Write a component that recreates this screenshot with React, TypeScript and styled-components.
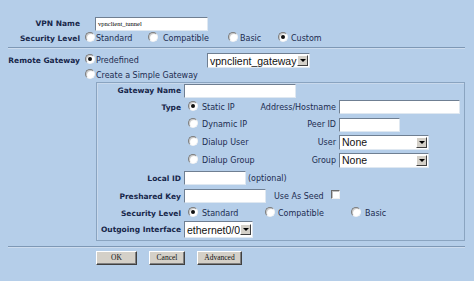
import React from "react";
import styled, { createGlobalStyle } from "styled-components";

const Global = createGlobalStyle`
  html, body { margin: 0; padding: 0; background: #b5cee9; }
  body {
    font-family: "DejaVu Sans", Verdana, sans-serif;
    font-size: 8px;
    color: #1c2c50;
  }
`;

const Page = styled.div`
  width: 474px;
  height: 281px;
  box-sizing: border-box;
  padding: 16px 9px 0 8px;
  background: #b5cee9;
  overflow: hidden;
`;

const TopGrid = styled.div<{ $rows: string }>`
  display: grid;
  grid-template-columns: 72px 1fr;
  column-gap: 4px;
  grid-template-rows: ${(p) => p.$rows};
  align-items: center;
`;

const Label = styled.div<{ $pad?: number }>`
  font-weight: bold;
  font-size: 7.5px;
  text-align: right;
  white-space: nowrap;
  color: #17264a;
  padding-right: ${(p) => p.$pad ?? 0}px;
`;

const SideLabel = styled.div`
  font-size: 8px;
  text-align: right;
  white-space: nowrap;
  padding-right: 3px;
`;

const Cell = styled.div<{ $span?: boolean; $indent?: number; $gap?: number }>`
  display: flex;
  align-items: center;
  white-space: nowrap;
  ${(p) => (p.$span ? "grid-column: 2 / 5;" : "")}
  padding-left: ${(p) => p.$indent ?? 0}px;
  gap: ${(p) => p.$gap ?? 0}px;
`;

const Rule = styled.div<{ $top: number; $bottom: number }>`
  height: 0;
  border-top: 1px solid #7e98b5;
  border-bottom: 1px solid #cddcee;
  margin: ${(p) => p.$top}px 0 ${(p) => p.$bottom}px;
`;

const RadioDot = styled.span<{ $checked?: boolean }>`
  position: relative;
  display: inline-block;
  box-sizing: border-box;
  width: 10px;
  height: 10px;
  border-radius: 50%;
  flex: none;
  border: 1px solid;
  border-color: #7d7d7d #f4f4f4 #f4f4f4 #7d7d7d;
  background: radial-gradient(circle at 65% 65%, #ffffff 45%, #dcdcdc 100%);
  box-shadow: inset 1px 1px 0 #c8c8c8;
  margin-top: -3px;
  &::after {
    content: "";
    display: ${(p) => (p.$checked ? "block" : "none")};
    position: absolute;
    left: 2px;
    top: 2px;
    width: 4px;
    height: 4px;
    border-radius: 50%;
    background: #111;
  }
`;

const OptionWrap = styled.label<{ $w?: number; $gap: number }>`
  display: inline-flex;
  align-items: center;
  gap: ${(p) => p.$gap}px;
  ${(p) => (p.$w ? `width: ${p.$w}px;` : "")}
  flex: none;
  white-space: nowrap;
  font-size: 8px;
  color: #1c2c50;
`;

const Option: React.FC<{ text: string; checked?: boolean; w?: number; gap?: number }> = ({
  text,
  checked,
  w,
  gap = 3,
}) => (
  <OptionWrap $w={w} $gap={gap}>
    <RadioDot $checked={checked} />
    <span>{text}</span>
  </OptionWrap>
);

const TextBox = styled.div<{ $w: number; $serif?: boolean; $ml?: number }>`
  box-sizing: border-box;
  width: ${(p) => p.$w}px;
  height: 14px;
  flex: none;
  margin-left: ${(p) => p.$ml ?? 0}px;
  background: #fff;
  border: 1px solid;
  border-color: #6f7f92 #dfe8f1 #dfe8f1 #6f7f92;
  padding: 0 2px;
  display: flex;
  align-items: center;
  font-family: ${(p) => (p.$serif ? '"Liberation Serif", "Times New Roman", serif' : "inherit")};
  font-size: ${(p) => (p.$serif ? "6.5px" : "8px")};
  color: #000;
`;

const SelectBox = styled.div<{ $w: number; $h?: number }>`
  box-sizing: border-box;
  width: ${(p) => p.$w}px;
  height: ${(p) => p.$h ?? 15}px;
  flex: none;
  background: #fff;
  border: 1px solid;
  border-color: #6f7f92 #dfe8f1 #dfe8f1 #6f7f92;
  display: flex;
  align-items: center;
  justify-content: space-between;
  padding: 0 1px 0 2px;
  font-family: "Liberation Sans", Arial, sans-serif;
  font-size: 10.5px;
  color: #111;
`;

const Arrow = styled.span`
  box-sizing: border-box;
  width: 11px;
  height: 11px;
  flex: none;
  background: #d4d0c8;
  border: 1px solid;
  border-color: #ffffff #404040 #404040 #ffffff;
  display: flex;
  align-items: center;
  justify-content: center;
  &::after {
    content: "";
    width: 0;
    height: 0;
    border-left: 3px solid transparent;
    border-right: 3px solid transparent;
    border-top: 3px solid #000;
  }
`;

const Select: React.FC<{ value: string; w: number; h?: number }> = ({ value, w, h }) => (
  <SelectBox $w={w} $h={h}>
    <span>{value}</span>
    <Arrow />
  </SelectBox>
);

const CheckBox = styled.span<{ $ml: number }>`
  display: inline-block;
  box-sizing: border-box;
  width: 9px;
  height: 9px;
  flex: none;
  margin-left: ${(p) => p.$ml}px;
  background: #fff;
  border: 1px solid;
  border-color: #6a6a6a #f0f0f0 #f0f0f0 #6a6a6a;
  box-shadow: inset 1px 1px 0 #c0c0c0;
  margin-top: -4px;
`;

const Note = styled.span<{ $ml: number }>`
  margin-left: ${(p) => p.$ml}px;
  font-size: 8px;
`;

const GatewayBox = styled.div`
  margin-left: 88px;
  border: 1px solid #8aa4c0;
  box-shadow: inset 1px 1px 0 #c9d9ec;
`;

const BoxGrid = styled.div`
  display: grid;
  grid-template-columns: 87px 72px 83px 1fr;
  grid-template-rows: 15px 18px 17px 18px 18px 18px 18px 16px 17px;
  align-items: center;
  padding-bottom: 2px;
`;

const ButtonBar = styled.div`
  margin-left: 88px;
  display: flex;
  gap: 12px;
`;

const Button = styled.button<{ $w: number }>`
  box-sizing: border-box;
  width: ${(p) => p.$w}px;
  height: 14px;
  padding: 0;
  background: #d4d0c8;
  border: 1px solid;
  border-color: #ffffff #404040 #404040 #ffffff;
  box-shadow: inset -1px -1px 0 #808080;
  font-family: "Liberation Serif", "Times New Roman", serif;
  font-size: 7.5px;
  color: #111;
  line-height: 1;
`;

export default function App() {
  return (
    <>
      <Global />
      <Page>
        <TopGrid $rows="15px 14px">
          <Label>VPN Name</Label>
          <Cell>
            <TextBox $w={113} $serif $ml={11}>
              vpnclient_tunnel
            </TextBox>
          </Cell>
          <Label>Security Level</Label>
          <Cell $indent={1}>
            <Option text="Standard" gap={1} w={63} />
            <Option text="Compatible" gap={5} w={80} />
            <Option text="Basic" gap={2} w={50} />
            <Option text="Custom" gap={3} checked />
          </Cell>
        </TopGrid>
        <Rule $top={2} $bottom={4} />
        <TopGrid $rows="15px 14px">
          <Label>Remote Gateway</Label>
          <Cell $indent={1}>
            <Option text="Predefined" gap={1} w={122} checked />
            <Select value="vpnclient_gateway" w={103} />
          </Cell>
          <div />
          <Cell $indent={1}>
            <Option text="Create a Simple Gateway" gap={1} />
          </Cell>
        </TopGrid>
        <GatewayBox>
          <BoxGrid>
            <Label $pad={3}>Gateway Name</Label>
            <Cell $span>
              <TextBox $w={112} />
            </Cell>

            <Label $pad={3}>Type</Label>
            <Cell $indent={4}>
              <Option text="Static IP" gap={4} checked />
            </Cell>
            <SideLabel>Address/Hostname</SideLabel>
            <Cell>
              <TextBox $w={121} />
            </Cell>

            <div />
            <Cell $indent={4}>
              <Option text="Dynamic IP" gap={4} />
            </Cell>
            <SideLabel>Peer ID</SideLabel>
            <Cell>
              <TextBox $w={61} />
            </Cell>

            <div />
            <Cell $indent={4}>
              <Option text="Dialup User" gap={4} />
            </Cell>
            <SideLabel>User</SideLabel>
            <Cell>
              <Select value="None" w={90} />
            </Cell>

            <div />
            <Cell $indent={4}>
              <Option text="Dialup Group" gap={4} />
            </Cell>
            <SideLabel>Group</SideLabel>
            <Cell>
              <Select value="None" w={90} />
            </Cell>

            <Label $pad={3}>Local ID</Label>
            <Cell $span>
              <TextBox $w={62} />
              <Note $ml={2}>(optional)</Note>
            </Cell>

            <Label $pad={3}>Preshared Key</Label>
            <Cell $span>
              <TextBox $w={82} />
              <Note $ml={8}>Use As Seed</Note>
              <CheckBox $ml={7} />
            </Cell>

            <Label $pad={3}>Security Level</Label>
            <Cell $span $indent={4}>
              <Option text="Standard" gap={4} w={77} checked />
              <Option text="Compatible" gap={3} w={86} />
              <Option text="Basic" gap={4} />
            </Cell>

            <Label $pad={3}>Outgoing Interface</Label>
            <Cell $span>
              <Select value="ethernet0/0" w={69} h={17} />
            </Cell>
          </BoxGrid>
        </GatewayBox>
        <Rule $top={5} $bottom={3} />
        <ButtonBar>
          <Button $w={41}>OK</Button>
          <Button $w={36}>Cancel</Button>
          <Button $w={45}>Advanced</Button>
        </ButtonBar>
      </Page>
    </>
  );
}
